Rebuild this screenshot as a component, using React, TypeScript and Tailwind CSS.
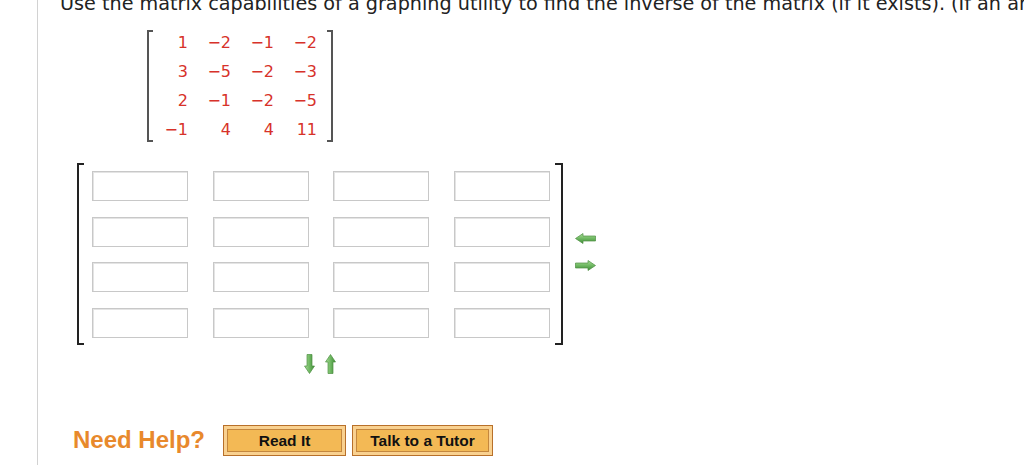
import React from 'react'

const given = [
    ['1', '−2', '−1', '−2'],
    ['3', '−5', '−2', '−3'],
    ['2', '−1', '−2', '−5'],
    ['−1', '4', '4', '11'],
]

const ArrowH = ({ dir }: { dir: 'left' | 'right' }) => (
    <svg width="21" height="11" viewBox="0 0 21 11" className={dir === 'right' ? '-scale-x-100' : ''}>
        <defs>
            <linearGradient id={`gh-${dir}`} x1="0" y1="0" x2="0" y2="1">
                <stop offset="0" stopColor="#a9dc97" />
                <stop offset="0.5" stopColor="#6fb862" />
                <stop offset="1" stopColor="#3f8c37" />
            </linearGradient>
        </defs>
        <polygon
            points="0.5,5.5 8,0.5 8,3 20.5,3 20.5,8 8,8 8,10.5"
            fill={`url(#gh-${dir})`}
            stroke="#4d8f44"
            strokeWidth="0.7"
        />
    </svg>
)

const ArrowV = ({ dir }: { dir: 'up' | 'down' }) => (
    <svg width="11" height="20" viewBox="0 0 11 20" className={dir === 'up' ? '-scale-y-100' : ''}>
        <defs>
            <linearGradient id={`gv-${dir}`} x1="0" y1="0" x2="1" y2="0">
                <stop offset="0" stopColor="#a9dc97" />
                <stop offset="0.5" stopColor="#6fb862" />
                <stop offset="1" stopColor="#3f8c37" />
            </linearGradient>
        </defs>
        <polygon
            points="3,0.5 8,0.5 8,12 10.5,12 5.5,19.5 0.5,12 3,12"
            fill={`url(#gv-${dir})`}
            stroke="#4d8f44"
            strokeWidth="0.7"
        />
    </svg>
)

const HelpButton = ({ label, width }: { label: string; width: string }) => (
    <div className={`${width} h-[31px] flex border border-[#b8702a] bg-[#f9d190] p-[3px]`}>
        <div className="flex-1 flex items-center justify-center border border-[#c4873e] bg-[#f3b955] text-[15.5px] font-bold text-[#111] font-['Liberation_Sans',Arial,sans-serif]">
            {label}
        </div>
    </div>
)

const App: React.FC = () => {
    return (
        <div className="w-[1024px] h-[465px] overflow-hidden bg-white flex font-['DejaVu_Sans',Verdana,sans-serif]">
            <div className="w-[37px] shrink-0" />
            <div className="flex-1 min-w-0 border-l border-[#d2d2d2] pl-[22px]">
                {/* question text */}
                <p className="mt-[-8px] h-6 text-[19.2px] leading-6 text-[#222] whitespace-nowrap">
                    Use the matrix capabilities of a graphing utility to find the inverse of the matrix (if it exists). (If an answer does not exist, enter DNE.)
                </p>

                {/* given matrix */}
                <div className="flex ml-[87px] mt-[12px]">
                    <div className="w-[6px] my-[2px] border-l-2 border-y-2 border-[#555]" />
                    <div className="grid grid-cols-[35px_43px_43px_43px] text-[16px] text-[#d7322a]">
                        {given.flat().map((v, i) => (
                            <div key={i} className="h-[29px] flex items-center justify-end">
                                {v}
                            </div>
                        ))}
                    </div>
                    <div className="w-[6px] ml-[10px] my-[2px] border-r-2 border-y-2 border-[#555]" />
                </div>

                {/* answer matrix */}
                <div className="flex ml-[17px] mt-[19px]">
                    <div className="w-[7px] border-l-2 border-y-2 border-[#222]" />
                    <div className="ml-[8px] pt-[8px] pb-[7px] grid grid-cols-[repeat(4,96px)] gap-x-[24.67px] gap-y-[15.67px]">
                        {Array.from({ length: 16 }).map((_, i) => (
                            <input
                                key={i}
                                type="text"
                                className="h-[30px] w-[96px] border border-[#c8c8c8] bg-white shadow-[inset_1px_1px_0_#e4e4e4] outline-none"
                            />
                        ))}
                    </div>
                    <div className="w-[8px] ml-[5px] border-r-2 border-y-2 border-[#222]" />
                    <div className="ml-[12px] mt-[70px] flex flex-col gap-[16px]">
                        <ArrowH dir="left" />
                        <ArrowH dir="right" />
                    </div>
                </div>

                {/* row / column arrows */}
                <div className="ml-[17px] w-[486px] mt-[9px] flex justify-center gap-[10px]">
                    <ArrowV dir="down" />
                    <ArrowV dir="up" />
                </div>

                {/* help */}
                <div className="ml-[13px] mt-[51px] flex items-center">
                    <span className="text-[24px] font-bold text-[#e8892c] font-['Liberation_Sans',Arial,sans-serif] leading-none">
                        Need Help?
                    </span>
                    <div className="ml-[18px] flex gap-[6px]">
                        <HelpButton label="Read It" width="w-[123px]" />
                        <HelpButton label="Talk to a Tutor" width="w-[141px]" />
                    </div>
                </div>
            </div>
        </div>
    )
}

export default App
